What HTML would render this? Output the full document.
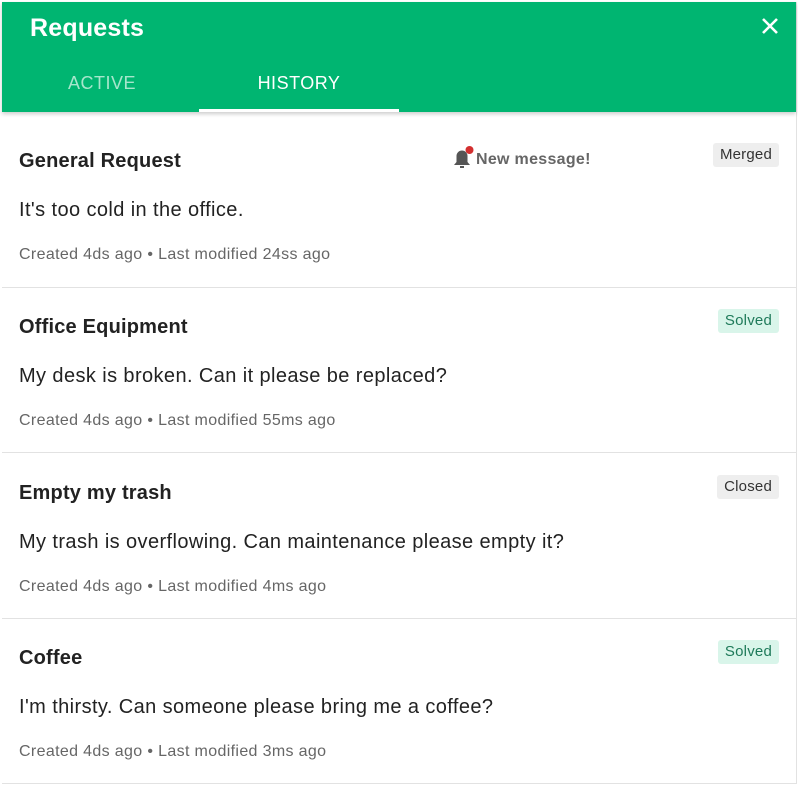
<!DOCTYPE html>
<html><head><style>
*{margin:0;padding:0;box-sizing:border-box}
body{width:798px;height:785px;background:#fff;font-family:"Liberation Sans",sans-serif;position:relative;overflow:hidden}
.frame{position:absolute;left:2px;top:2px;width:795px;height:782px;border-right:1px solid #e2e2e2;border-bottom:1px solid #e2e2e2}
.hdr{position:absolute;left:2px;top:2px;width:794px;height:110px;background:#00b571;box-shadow:0 2px 4px rgba(0,0,0,.2)}
.title{position:absolute;left:28px;top:12px;color:#fff;font-size:25px;font-weight:bold;letter-spacing:0.2px}
.x{position:absolute;left:758px;top:14px;width:20px;height:20px}
.tab{position:absolute;top:71px;font-size:18px;width:200px;text-align:center;letter-spacing:0.5px}
.ul{position:absolute;left:197px;top:107px;width:200px;height:3px;background:#fff}
.row{position:absolute;left:2px;width:794px;height:165px;border-bottom:1px solid #e2e2e2}
.h{position:absolute;left:17px;top:28px;font-size:20px;font-weight:bold;color:#222;letter-spacing:0.2px}
.d{position:absolute;left:17px;top:77px;font-size:20px;color:#222;letter-spacing:0.4px}
.m{position:absolute;left:17px;top:124px;font-size:16px;color:#666;letter-spacing:0.35px}
.b{position:absolute;right:17px;top:21px;font-size:15px;padding:3px 7px 4px;border-radius:3px;background:#eee;color:#333;letter-spacing:0.2px}
.b.s{background:#d9f5ea;color:#1f7a5a}
.nm{position:absolute;left:450px;top:23px;font-size:16px;font-weight:bold;color:#666;letter-spacing:0.3px}
</style></head><body>
<div class="frame"></div>
<div class="hdr">
<div class="title">Requests</div>
<svg class="x" viewBox="0 0 20 20"><path d="M3 3L17 17M17 3L3 17" stroke="#fff" stroke-width="2.6"/></svg>
<div class="tab" style="left:0;color:#a6e6cc">ACTIVE</div>
<div class="tab" style="left:197px;color:#fff">HISTORY</div>
<div class="ul"></div>
</div>
<div class="row" style="top:122px;height:166px">
<div class="h">General Request</div>
<div class="nm"><svg width="24" height="24" viewBox="0 0 24 24" style="vertical-align:-5px"><path d="M2 20h16l-2.5-3V11a5.5 5.5 0 0 0-11 0v6z" fill="#555"/><rect x="8" y="21" width="4" height="2" fill="#555"/><circle cx="17.5" cy="5" r="4" fill="#d32f2f"/></svg>New message!</div>
<div class="b">Merged</div>
<div class="d">It's too cold in the office.</div>
<div class="m">Created 4ds ago • Last modified 24ss ago</div>
</div>
<div class="row" style="top:288px">
<div class="h">Office Equipment</div><div class="b s">Solved</div>
<div class="d">My desk is broken. Can it please be replaced?</div>
<div class="m">Created 4ds ago • Last modified 55ms ago</div>
</div>
<div class="row" style="top:454px">
<div class="h">Empty my trash</div><div class="b">Closed</div>
<div class="d">My trash is overflowing. Can maintenance please empty it?</div>
<div class="m">Created 4ds ago • Last modified 4ms ago</div>
</div>
<div class="row" style="top:619px">
<div class="h">Coffee</div><div class="b s">Solved</div>
<div class="d">I'm thirsty. Can someone please bring me a coffee?</div>
<div class="m">Created 4ds ago • Last modified 3ms ago</div>
</div>
</body></html>
